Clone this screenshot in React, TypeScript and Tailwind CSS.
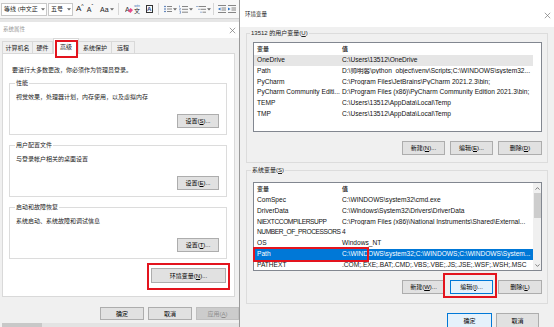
import React from "react";

type Row = { n: string; v: string; hover?: boolean; sel?: boolean; mark?: boolean; tight?: boolean };

const userRows: Row[] = [
  { n: "OneDrive", v: "C:\\Users\\13512\\OneDrive", hover: true },
  { n: "Path", v: "D:\\帅明馨\\python_object\\venv\\Scripts;C:\\WINDOWS\\system32..." },
  { n: "PyCharm", v: "C:\\Program Files\\JetBrains\\PyCharm 2021.2.3\\bin;" },
  { n: "PyCharm Community Editi...", v: "D:\\Program Files (x86)\\PyCharm Community Edition 2021.3\\bin;" },
  { n: "TEMP", v: "C:\\Users\\13512\\AppData\\Local\\Temp" },
  { n: "TMP", v: "C:\\Users\\13512\\AppData\\Local\\Temp" },
];

const sysRows: Row[] = [
  { n: "ComSpec", v: "C:\\WINDOWS\\system32\\cmd.exe" },
  { n: "DriverData", v: "C:\\Windows\\System32\\Drivers\\DriverData" },
  { n: "NIEXTCCOMPILERSUPP", v: "C:\\Program Files (x86)\\National Instruments\\Shared\\External...", tight: true },
  { n: "NUMBER_OF_PROCESSORS", v: "4", tight: true },
  { n: "OS", v: "Windows_NT" },
  { n: "Path", v: "C:\\WINDOWS\\system32;C:\\WINDOWS;C:\\WINDOWS\\System...", sel: true, mark: true },
  { n: "PATHEXT", v: ".COM;.EXE;.BAT;.CMD;.VBS;.VBE;.JS;.JSE;.WSF;.WSH;.MSC" },
];

function Caret() {
  return (
    <svg width="4" height="3" viewBox="0 0 4 3" className="shrink-0">
      <path d="M0 0.3H4L2 2.6Z" fill="#666" />
    </svg>
  );
}

function CloseX() {
  return (
    <svg width="7" height="7" viewBox="0 0 7 7" className="shrink-0">
      <path d="M0.8 0.8L6.2 6.2M6.2 0.8L0.8 6.2" stroke="#777" strokeWidth="0.7" />
    </svg>
  );
}

function Sep({ className = "" }: { className?: string }) {
  return <div className={`w-px h-[12px] bg-[#d6d6d6] ${className}`} />;
}

function Btn({
  children,
  className = "",
  primary = false,
  disabled = false,
}: {
  children: React.ReactNode;
  className?: string;
  primary?: boolean;
  disabled?: boolean;
}) {
  return (
    <div
      className={`relative flex items-center justify-center border text-[6px] leading-none whitespace-nowrap shrink-0 ${
        primary
          ? "bg-[#e5f1fb] border-[#0078d7]"
          : disabled
          ? "bg-[#cccccc] border-[#bfbfbf] text-[#8d8d8d]"
          : "bg-[#e1e1e1] border-[#adadad]"
      } ${className}`}
    >
      {children}
    </div>
  );
}

function Toolbar() {
  return (
    <div className="h-[18px] bg-[#f8f8f8] flex items-center text-[6px] text-[#222] leading-none">
      <div className="ml-[1px] w-[46px] h-[13px] bg-white border border-[#c8c8c8] flex items-center justify-between pl-[2px] pr-[1px]">
        <span className="whitespace-nowrap">等线 (中文正</span>
        <Caret />
      </div>
      <div className="ml-[1px] w-[25px] h-[13px] bg-white border border-[#c8c8c8] flex items-center justify-between pl-[2px] pr-[1px]">
        <span>五号</span>
        <Caret />
      </div>
      <div className="ml-[3px] flex items-start h-[10px]">
        <span className="text-[8px] leading-[10px]">A</span>
        <span className="text-[5px] leading-[5px]">^</span>
      </div>
      <div className="ml-[3px] flex items-start h-[10px]">
        <span className="text-[7px] leading-[10px] mt-[1px]">A</span>
        <span className="text-[5px] leading-[5px]">ˇ</span>
      </div>
      <div className="ml-[7px] flex items-center gap-[1px]">
        <span className="text-[7px]">Aa</span>
        <Caret />
      </div>
      <Sep className="ml-[4px]" />
      <svg width="8" height="8" viewBox="0 0 8 8" className="ml-[6px]">
        <text x="0" y="6.5" fontSize="7" fontFamily="Liberation Sans" fill="#333">A</text>
        <path d="M3 6L5.5 3L8 5L5.5 8Z" fill="#e64a8a" />
      </svg>
      <div className="ml-[1px] flex flex-col items-center w-[7px]">
        <span className="text-[3px] leading-[3px] text-[#2b6cb0]">wén</span>
        <span className="text-[6px] leading-[6px]">文</span>
      </div>
      <div className="ml-[5px] w-[7px] h-[8px] border border-[#333] flex items-center justify-center text-[6px] font-bold text-[#2a4f8a]">
        A
      </div>
      <Sep className="ml-[5px]" />
      <svg width="8" height="8" viewBox="0 0 8 8" className="ml-[5px]">
        <circle cx="1" cy="1.5" r="0.8" fill="#2e5fa8" />
        <circle cx="1" cy="4" r="0.8" fill="#2e5fa8" />
        <circle cx="1" cy="6.5" r="0.8" fill="#2e5fa8" />
        <path d="M3 1.5H8M3 4H8M3 6.5H8" stroke="#555" strokeWidth="0.7" />
      </svg>
      <div className="ml-[1px]"><Caret /></div>
      <svg width="9" height="9" viewBox="0 0 9 9" className="ml-[2px]">
        <path d="M0.5 0.5V2.5M0.5 3.5H1.5L0.5 5H1.5M0.5 6.2H1.5V8.3H0.5" stroke="#2e5fa8" strokeWidth="0.5" fill="none" />
        <path d="M3 1.5H9M3 4.3H9M3 7.2H9" stroke="#555" strokeWidth="0.7" />
      </svg>
      <div className="ml-[1px]"><Caret /></div>
      <svg width="10" height="9" viewBox="0 0 10 9" className="ml-[3px]">
        <path d="M0.5 1.5H1.5M2.5 4.3H3.5M4.5 7.2H5.5" stroke="#2e5fa8" strokeWidth="0.9" />
        <path d="M2.5 1.5H10M4.5 4.3H10M6.5 7.2H10" stroke="#555" strokeWidth="0.7" />
      </svg>
      <div className="ml-[1px]"><Caret /></div>
      <Sep className="ml-[2px]" />
      <svg width="8" height="8" viewBox="0 0 8 8" className="ml-[4px]">
        <path d="M0 0.5H8M3.5 3H8M3.5 5H8M0 7.5H8" stroke="#555" strokeWidth="0.7" />
        <path d="M0 4L2.5 2.5V5.5Z" fill="#2e74c8" />
      </svg>
      <svg width="8" height="8" viewBox="0 0 8 8" className="ml-[2px]">
        <path d="M0 0.5H8M3.5 3H8M3.5 5H8M0 7.5H8" stroke="#555" strokeWidth="0.7" />
        <path d="M2.5 4L0 2.5V5.5Z" fill="#2e74c8" />
      </svg>
    </div>
  );
}

function Group({
  label,
  text,
  btn,
  className = "",
}: {
  label: string;
  text: string;
  btn: React.ReactNode;
  className?: string;
}) {
  return (
    <div className={`relative ml-[6px] w-[218px] h-[52px] border border-[#dcdcdc] flex flex-col ${className}`}>
      <span className="absolute -top-[4.5px] left-[5px] bg-white px-[1px] text-[6px] leading-[7px] text-[#222]">{label}</span>
      <span className="ml-[6px] mt-[9px] text-[6px] leading-[8px] text-[#222] whitespace-nowrap">{text}</span>
      <div className="mt-[13px] self-end mr-[7px]">{btn}</div>
    </div>
  );
}

function Tab({ label, className = "" }: { label: string; className?: string }) {
  return (
    <div
      className={`h-[12px] border border-b-0 border-[#d9d9d9] bg-[#f0f0f0] flex items-center justify-center text-[6px] leading-none text-[#222] whitespace-nowrap ${className}`}
    >
      {label}
    </div>
  );
}

function LeftDialog() {
  return (
    <div className="w-[239px] shrink-0 flex flex-col bg-[#f0f0f0]">
      <Toolbar />
      <div className="h-[4px] bg-[#e6e6e6] border-t border-[#d2d2d2]" />
      <div className="h-[16px] bg-white flex items-center justify-between pl-[3px] pr-[3px]">
        <span className="text-[5.5px] leading-none text-[#9a9a9a]">系统属性</span>
        <CloseX />
      </div>
      <div className="flex-1 flex flex-col pl-[2px] bg-[#f0f0f0]">
        <div className="h-[15px] flex items-end">
          <Tab label="计算机名" className="w-[31px]" />
          <Tab label="硬件" className="w-[20px] border-l-0" />
          <div className="relative z-10 -mb-px h-[16px] w-[26px] bg-white border border-b-0 border-[#d9d9d9] flex items-center justify-center text-[6px] leading-none text-[#222]">
            高级
            <div className="absolute left-[1px] top-[1px] w-[23px] h-[18px] border-2 border-[#e3141e]" />
          </div>
          <Tab label="系统保护" className="w-[33px] border-l-0" />
          <Tab label="远程" className="w-[23px] border-l-0" />
        </div>
        <div className="w-[233px] h-[244px] bg-white border border-[#d9d9d9] flex flex-col">
          <span className="ml-[9px] mt-[12px] text-[6px] leading-[8px] text-[#222]">要进行大多数更改，你必须作为管理员登录。</span>
          <Group
            className="mt-[9px]"
            label="性能"
            text="视觉效果，处理器计划，内存使用，以及虚拟内存"
            btn={<Btn className="w-[42px] h-[14px]">设置(<u>S</u>)...</Btn>}
          />
          <Group
            className="mt-[10px]"
            label="用户配置文件"
            text="与登录帐户相关的桌面设置"
            btn={<Btn className="w-[42px] h-[14px]">设置(<u>E</u>)...</Btn>}
          />
          <Group
            className="mt-[10px]"
            label="启动和故障恢复"
            text="系统启动、系统故障和调试信息"
            btn={<Btn className="w-[42px] h-[14px]">设置(<u>T</u>)...</Btn>}
          />
          <div className="mt-[9px] self-end mr-[8px]">
            <Btn className="w-[75px] h-[15px]">
              环境变量(<u>N</u>)...
              <div className="absolute -left-[5px] -top-[6px] w-[83px] h-[27px] border-2 border-[#e3141e]" />
            </Btn>
          </div>
        </div>
        <div className="mt-[10px] flex justify-end gap-[4px]">
          <Btn className="w-[44px] h-[13px]">确定</Btn>
          <Btn className="w-[44px] h-[13px]">取消</Btn>
          <Btn className="w-[43px] h-[13px]" disabled>
            应用(<u>A</u>)
          </Btn>
        </div>
        <div className="mt-auto h-[4px] flex">
          <div className="w-[40px] bg-[#c8c8c8]" />
          <div className="flex-1 bg-[#e3e3e3]" />
        </div>
      </div>
    </div>
  );
}

function VarRow({ r }: { r: Row }) {
  return (
    <div
      className={`relative flex h-[10.8px] items-center w-[279px] shrink-0 ${
        r.sel ? "bg-[#0078d7] text-white" : r.hover ? "bg-[#e6e6e6]" : ""
      }`}
    >
      <div className={`w-[85px] pl-[3px] shrink-0 whitespace-nowrap ${r.tight ? "tracking-[-0.4px]" : ""}`}>{r.n}</div>
      <div className="pl-[3px] flex-1 whitespace-nowrap overflow-hidden">{r.v}</div>
      {r.mark && <div className="absolute -left-[1px] -top-[1.5px] w-[116px] h-[15px] border-2 border-[#e3141e]" />}
    </div>
  );
}

function Chevron({ up }: { up?: boolean }) {
  return (
    <svg width="5" height="3" viewBox="0 0 5 3">
      <path d={up ? "M0.5 2.6L2.5 0.6L4.5 2.6" : "M0.5 0.4L2.5 2.4L4.5 0.4"} stroke="#606060" strokeWidth="0.8" fill="none" />
    </svg>
  );
}

function VarList({ rows, scroll, className = "" }: { rows: Row[]; scroll?: boolean; className?: string }) {
  return (
    <div className={`ml-[6px] w-[289px] bg-white border border-[#828790] flex ${className}`}>
      <div className="flex-1 flex flex-col text-[6.6px] leading-none text-[#111]">
        <div className="h-[12px] flex items-center shrink-0">
          <div className="w-[85px] pl-[3px] text-[6px] font-medium">变量</div>
          <div className="pl-[3px] text-[6px] font-medium">值</div>
        </div>
        {rows.map((r, i) => (
          <VarRow key={i} r={r} />
        ))}
      </div>
      {scroll && (
        <div className="w-[9px] bg-[#f0f0f0] flex flex-col items-center">
          <div className="h-[10px] flex items-center justify-center">
            <Chevron up />
          </div>
          <div className="w-[7px] h-[25px] bg-[#cdcdcd]" />
          <div className="flex-1" />
          <div className="h-[10px] flex items-center justify-center">
            <Chevron />
          </div>
        </div>
      )}
    </div>
  );
}

function RightDialog() {
  return (
    <div className="flex-1 flex flex-col border-l border-[#9a9a9a] bg-[#f0f0f0]">
      <div className="h-[27px] shrink-0 bg-white flex items-center justify-between pl-[5px] pr-[3px] pt-[3px]">
        <span className="text-[5.5px] leading-none text-[#222]">环境变量</span>
        <CloseX />
      </div>
      <div className="flex flex-col pl-[6px]">
        <div className="relative mt-[6px] w-[302px] h-[130px] border border-[#dcdcdc] flex flex-col">
          <span className="absolute -top-[4.5px] left-[3px] bg-[#f0f0f0] px-[1px] text-[6px] leading-[7px] text-[#222]">
            13512 的用户变量(<u>U</u>)
          </span>
          <VarList rows={userRows} className="mt-[8px] h-[90px]" />
          <div className="mt-[9px] mr-[5px] flex justify-end gap-[5px]">
            <Btn className="w-[43px] h-[14px]">新建(<u>N</u>)...</Btn>
            <Btn className="w-[43px] h-[14px]">编辑(<u>E</u>)...</Btn>
            <Btn className="w-[44px] h-[14px]">删除(<u>D</u>)</Btn>
          </div>
        </div>
        <div className="relative mt-[7px] w-[302px] h-[134px] border border-[#dcdcdc] flex flex-col">
          <span className="absolute -top-[4.5px] left-[4px] bg-[#f0f0f0] px-[1px] text-[6px] leading-[7px] text-[#222]">
            系统变量(<u>S</u>)
          </span>
          <VarList rows={sysRows} scroll className="mt-[11px] h-[89px]" />
          <div className="mt-[9px] mr-[5px] flex justify-end gap-[5px]">
            <Btn className="w-[43px] h-[14px]">新建(<u>W</u>)...</Btn>
            <Btn className="w-[43px] h-[14px]" primary>
              编辑(<u>I</u>)...
              <div className="absolute -left-[8px] -top-[8px] w-[54px] h-[25px] border-2 border-[#e3141e]" />
            </Btn>
            <Btn className="w-[44px] h-[14px]">删除(<u>L</u>)</Btn>
          </div>
        </div>
        <div className="mt-[9px] w-[302px] pr-[9px] flex justify-end gap-[4px]">
          <Btn className="w-[45px] h-[15px]" primary>确定</Btn>
          <Btn className="w-[43px] h-[15px]">取消</Btn>
        </div>
      </div>
    </div>
  );
}

export default function App() {
  return (
    <div className="w-[554px] h-[327px] overflow-hidden flex bg-white font-['Liberation_Sans','Noto_Sans_CJK_SC',sans-serif] text-black leading-none">
      <LeftDialog />
      <RightDialog />
    </div>
  );
}
